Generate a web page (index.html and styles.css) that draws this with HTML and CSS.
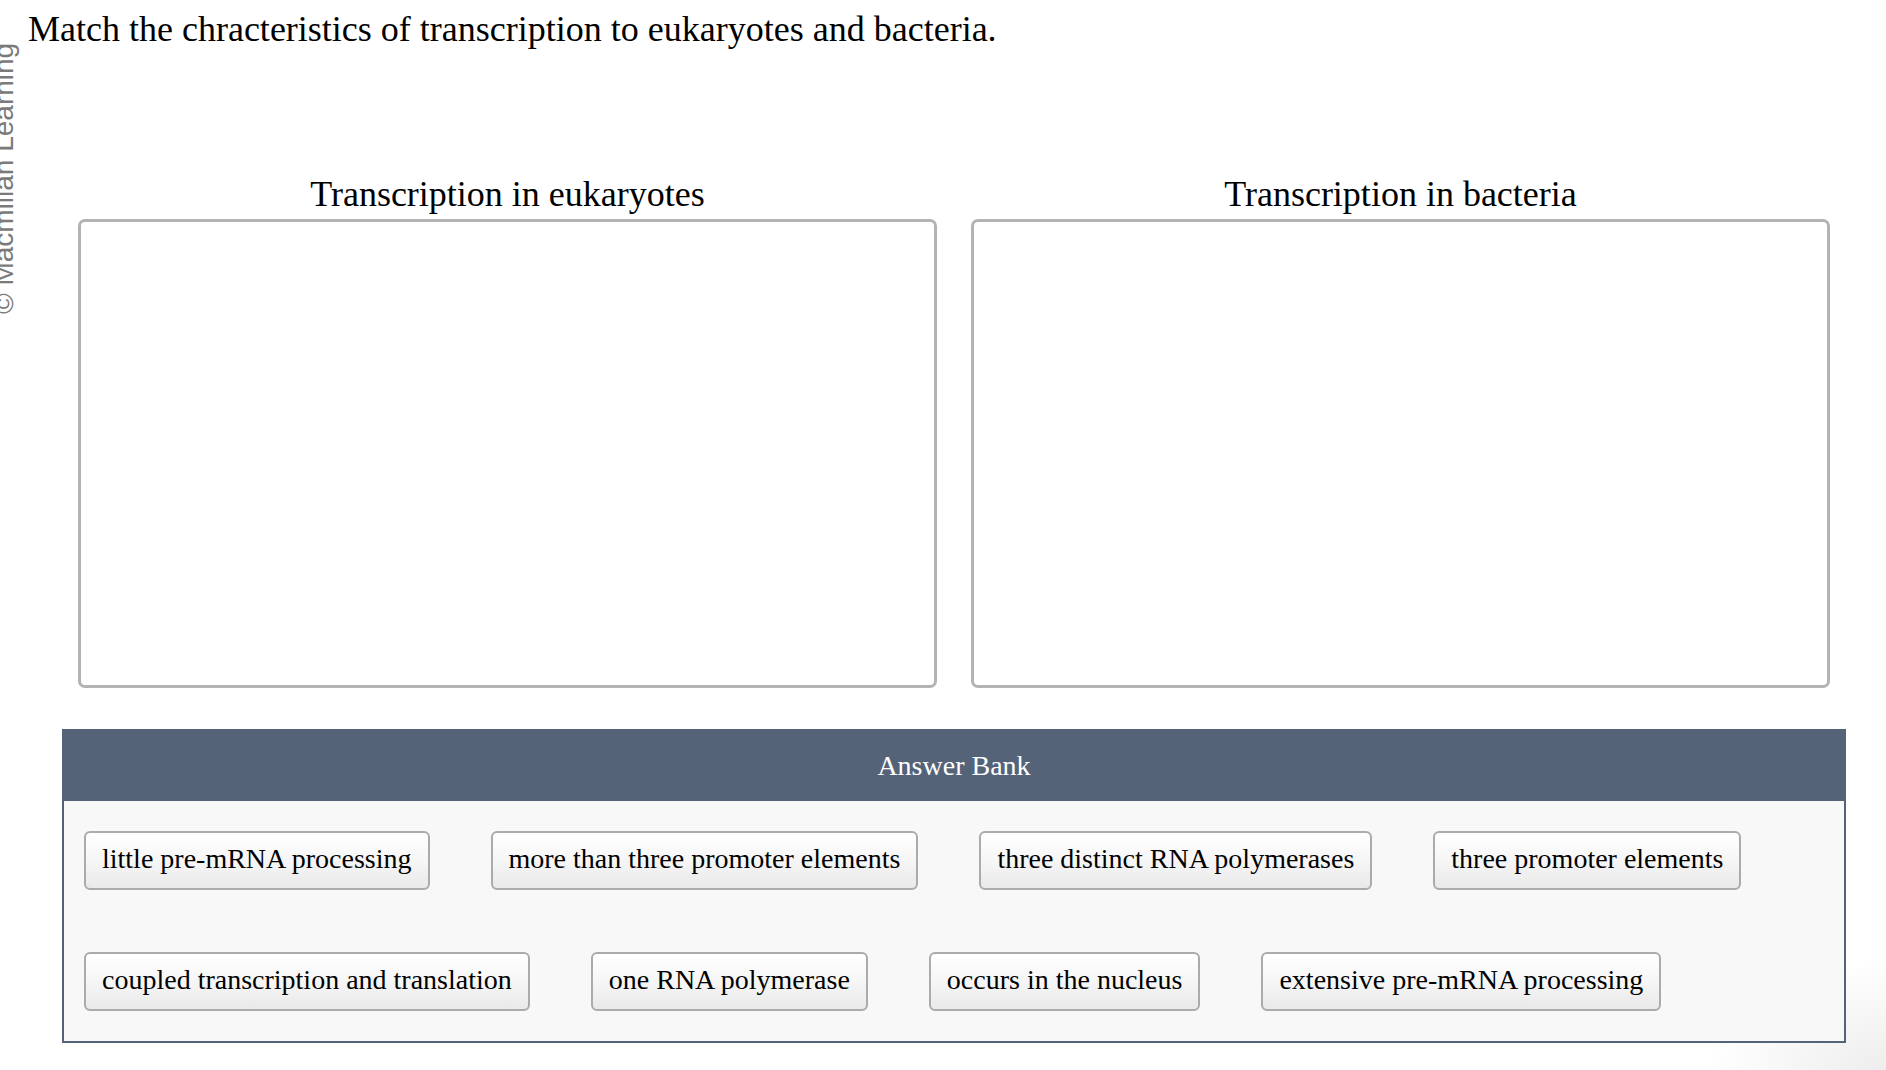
FILE: index.html
```html
<!DOCTYPE html>
<html lang="en">
<head>
<meta charset="utf-8">
<title>Match the chracteristics of transcription</title>
<link rel="stylesheet" href="styles.css">
</head>
<body>
<div class="page">
  <span class="watermark">© Macmillan Learning</span>
  <h1 class="prompt">Match the chracteristics of transcription to eukaryotes and bacteria.</h1>
  <div class="columns">
    <div class="column">
      <h2 class="column-title">Transcription in eukaryotes</h2>
      <div class="dropzone"></div>
    </div>
    <div class="column">
      <h2 class="column-title">Transcription in bacteria</h2>
      <div class="dropzone"></div>
    </div>
  </div>
  <div class="bank">
    <div class="bank-header">Answer Bank</div>
    <div class="bank-body">
      <div class="bank-row">
        <div class="chip">little pre-mRNA processing</div>
        <div class="chip">more than three promoter elements</div>
        <div class="chip">three distinct RNA polymerases</div>
        <div class="chip">three promoter elements</div>
      </div>
      <div class="bank-row">
        <div class="chip">coupled transcription and translation</div>
        <div class="chip">one RNA polymerase</div>
        <div class="chip">occurs in the nucleus</div>
        <div class="chip">extensive pre-mRNA processing</div>
      </div>
    </div>
  </div>
</div>
</body>
</html>
```
FILE: styles.css
```css
html, body {
  margin: 0;
  padding: 0;
}
body {
  width: 1886px;
  height: 1070px;
  overflow: hidden;
  background: radial-gradient(ellipse 180px 110px at 100% 100%, rgba(0,0,0,0.07), rgba(0,0,0,0) 100%), #ffffff;
  font-family: "Liberation Serif", "Times New Roman", serif;
  color: #000;
}
.page {
  position: relative;
  height: 1070px;
  overflow: hidden;
}
.watermark {
  position: absolute;
  left: -10px;
  top: 314px;
  transform-origin: left top;
  transform: rotate(-90deg);
  font-family: "Liberation Sans", Arial, sans-serif;
  font-size: 28px;
  line-height: 28px;
  white-space: nowrap;
  color: #7a7a7a;
}
.prompt {
  margin: 8px 0 0 28px;
  font-size: 36px;
  line-height: 42px;
  font-weight: normal;
}
.columns {
  display: flex;
  gap: 34px;
  margin: 123px 0 0 78px;
}
.column {
  width: 859px;
  display: flex;
  flex-direction: column;
}
.column-title {
  margin: 0 0 4px 0;
  font-size: 36px;
  line-height: 42px;
  font-weight: normal;
  text-align: center;
}
.dropzone {
  height: 463px;
  border: 3px solid #b3b3b3;
  border-radius: 7px;
  background: #ffffff;
}
.bank {
  margin: 41px 40px 0 62px;
  border: 2px solid #556379;
  background: #f8f8f8;
}
.bank-header {
  height: 70px;
  line-height: 70px;
  background: #556379;
  color: #ffffff;
  text-align: center;
  font-size: 28px;
}
.bank-body {
  padding: 30px 20px 30px 20px;
  display: flex;
  flex-direction: column;
  gap: 62px;
}
.bank-row {
  display: flex;
  gap: 61px;
}
.chip {
  font-size: 28px;
  line-height: 33px;
  padding: 9px 16px 13px 16px;
  border: 2px solid #ababab;
  border-radius: 6px;
  background: linear-gradient(to bottom, #ffffff 0%, #f6f6f6 50%, #e9e9e9 100%);
  white-space: nowrap;
}
```
